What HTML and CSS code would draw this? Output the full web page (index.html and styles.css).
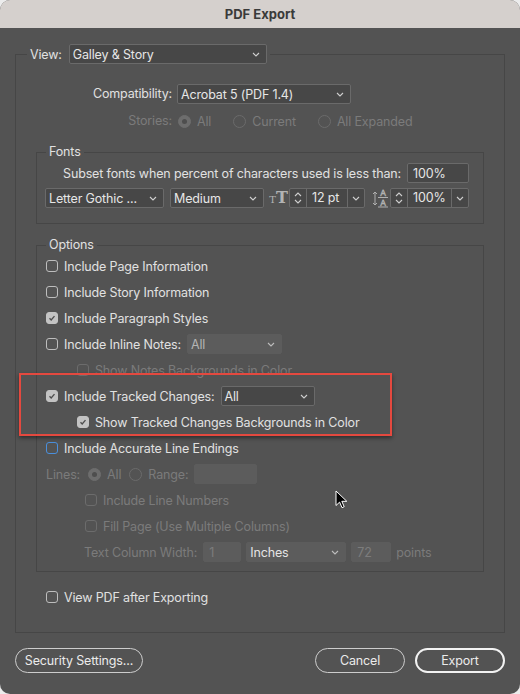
FILE: index.html
```html
<!DOCTYPE html>
<html>
<head>
<meta charset="utf-8">
<link rel="stylesheet" href="styles.css">
</head>
<body>
<div class="window">
  <div class="titlebar">PDF Export</div>
  <div class="main">
    <fieldset class="outer">
      <legend class="view-legend">
        <span>View:</span>
        <div class="select w-view"><span>Galley &amp; Story</span><svg class="chev" viewBox="0 0 8 5"><path d="M1 1l3 3 3-3"/></svg></div>
      </legend>

      <div class="compat">
        <span class="rlabel">Compatibility:</span>
        <div class="select w-compat"><span>Acrobat 5 (PDF 1.4)</span><svg class="chev" viewBox="0 0 8 5"><path d="M1 1l3 3 3-3"/></svg></div>
        <span class="rlabel dis">Stories:</span>
        <div class="radios">
          <span class="ritem"><span class="radio sel"></span><span class="dis">All</span></span>
          <span class="ritem"><span class="radio"></span><span class="dis">Current</span></span>
          <span class="ritem"><span class="radio"></span><span class="dis">All Expanded</span></span>
        </div>
      </div>

      <fieldset class="group fonts">
        <legend>Fonts</legend>
        <div class="subset-row">
          <span>Subset fonts when percent of characters used is less than:</span>
          <div class="input w-subset">100%</div>
        </div>
        <div class="font-row">
          <div class="select w-font"><span>Letter Gothic ...</span><svg class="chev" viewBox="0 0 8 5"><path d="M1 1l3 3 3-3"/></svg></div>
          <div class="select w-medium"><span>Medium</span><svg class="chev" viewBox="0 0 8 5"><path d="M1 1l3 3 3-3"/></svg></div>
          <span class="tt-icon"><span class="ts">T</span><span class="tb">T</span></span>
          <div class="combo w-size">
            <span class="spin"><svg viewBox="0 0 16 18"><path d="M5 7l3-3 3 3M5 11l3 3 3-3"/></svg></span>
            <span class="val">12 pt</span>
            <span class="drop"><svg class="chev" viewBox="0 0 8 5"><path d="M1 1l3 3 3-3"/></svg></span>
          </div>
          <svg class="lead-icon" viewBox="0 0 17 20">
            <path class="ln" d="M3 4v13M1 6l2-2 2 2M1 15l2 2 2-2"/>
            <text x="11" y="8" text-anchor="middle">A</text>
            <path class="ln" d="M6 9.5h10"/>
            <text x="11" y="17.5" text-anchor="middle">A</text>
            <path class="ln" d="M6 19h10"/>
          </svg>
          <div class="combo w-lead">
            <span class="spin"><svg viewBox="0 0 16 18"><path d="M5 7l3-3 3 3M5 11l3 3 3-3"/></svg></span>
            <span class="val">100%</span>
            <span class="drop"><svg class="chev" viewBox="0 0 8 5"><path d="M1 1l3 3 3-3"/></svg></span>
          </div>
        </div>
      </fieldset>

      <fieldset class="group options">
        <legend>Options</legend>
        <div class="row"><span class="cb"></span><span>Include Page Information</span></div>
        <div class="row"><span class="cb"></span><span>Include Story Information</span></div>
        <div class="row"><span class="cb on"><svg viewBox="0 0 12 12"><path d="M3 6.2l2 2.1 4-4.6"/></svg></span><span>Include Paragraph Styles</span></div>
        <div class="row"><span class="cb"></span><span>Include Inline Notes:</span>
          <div class="select dsel w-notes"><span>All</span><svg class="chev" viewBox="0 0 8 5"><path d="M1 1l3 3 3-3"/></svg></div>
        </div>
        <div class="row ind1"><span class="cb disb"></span><span class="dis">Show Notes Backgrounds in Color</span></div>
        <div class="row"><span class="cb on"><svg viewBox="0 0 12 12"><path d="M3 6.2l2 2.1 4-4.6"/></svg></span><span>Include Tracked Changes:</span>
          <div class="select w-tracked"><span>All</span><svg class="chev" viewBox="0 0 8 5"><path d="M1 1l3 3 3-3"/></svg></div>
        </div>
        <div class="row ind1"><span class="cb on"><svg viewBox="0 0 12 12"><path d="M3 6.2l2 2.1 4-4.6"/></svg></span><span>Show Tracked Changes Backgrounds in Color</span></div>
        <div class="row"><span class="cb focus"></span><span>Include Accurate Line Endings</span></div>
        <div class="row lines-row">
          <span class="dis">Lines:</span>
          <span class="ritem r-all"><span class="radio sel"></span><span class="dis">All</span></span>
          <span class="ritem r-range"><span class="radio"></span><span class="dis">Range:</span></span>
          <div class="input dinput w-range"></div>
        </div>
        <div class="row ind2"><span class="cb disb"></span><span class="dis">Include Line Numbers</span></div>
        <div class="row ind2"><span class="cb disb"></span><span class="dis">Fill Page (Use Multiple Columns)</span></div>
        <div class="row ind3 tcw-row">
          <span class="dis">Text Column Width:</span>
          <div class="input dinput w-tcw">1</div>
          <div class="select dsel bright w-inches"><span>Inches</span><svg class="chev" viewBox="0 0 8 5"><path d="M1 1l3 3 3-3"/></svg></div>
          <div class="input dinput w-pts">72</div>
          <span class="dis">points</span>
        </div>
      </fieldset>

      <div class="row view-pdf"><span class="cb"></span><span>View PDF after Exporting</span></div>
    </fieldset>

    <div class="buttons">
      <div class="btn sec">Security Settings...</div>
      <div class="btn cancel">Cancel</div>
      <div class="btn export">Export</div>
    </div>
  </div>

  <div class="highlight"></div>
  <svg class="cursor" viewBox="0 0 13 19"><path d="M1 1v14.5l3.6-3.4 2.4 5.6 2.2-1-2.4-5.4h5z"/></svg>
</div>
</body>
</html>
```

FILE: styles.css
```css
* { box-sizing: border-box; }
body {
  margin: 0;
  background: #ececec;
  font-family: Inter, "Noto Sans", "Liberation Sans", sans-serif;
  font-size: 12.5px;
  letter-spacing: -0.15px;
  color: #e1e1e1;
  white-space: nowrap;
}
.window {
  position: relative;
  width: 520px;
  height: 694px;
  background: #535353;
  border-radius: 10px;
  overflow: hidden;
}
.titlebar {
  height: 28px;
  background: #d5d0cd;
  color: #3a3a3a;
  font-weight: 700;
  font-size: 13px;
  letter-spacing: 0;
  display: flex;
  align-items: center;
  justify-content: center;
}
.main { padding: 0 15px; }

fieldset {
  margin: 0;
  min-width: 0;
  border: 1px solid #464646;
}
.outer {
  margin-top: 16px;
  padding: 0 20px 22px 20px;
}
.view-legend {
  margin-left: -9px;
  padding: 0 3px;
  display: flex;
  align-items: center;
  gap: 7px;
  height: 20px;
}

.select {
  display: flex;
  align-items: center;
  justify-content: space-between;
  height: 20px;
  background: #474747;
  border: 1px solid #6a6a6a;
  border-radius: 2px;
  padding: 0 6px 0 3px;
  color: #e6e6e6;
  flex: none;
}
.chev {
  width: 8px;
  height: 5px;
  fill: none;
  stroke: #cfcfcf;
  stroke-width: 1.1;
}
.w-view { width: 198px; }
.w-compat { width: 174px; }
.w-font { width: 119px; }
.w-medium { width: 94px; }
.w-notes { width: 95px; }
.w-tracked { width: 94px; }
.w-inches { width: 100px; }

.dsel {
  background: #5c5c5c;
  border-color: #5c5c5c;
  color: #b4b4b4;
}
.dsel .chev { stroke: #bdbdbd; }
.dsel.bright { color: #e4e4e4; }

.input {
  height: 20px;
  background: #474747;
  border: 1px solid #6a6a6a;
  border-radius: 2px;
  padding-left: 5px;
  display: flex;
  align-items: center;
  color: #e6e6e6;
  flex: none;
}
.dinput {
  background: #5c5c5c;
  border-color: #5c5c5c;
  color: #7c7c7c;
}
.w-subset { width: 62px; }
.w-range { width: 63px; }
.w-tcw { width: 38px; }
.w-pts { width: 40px; }

.compat {
  display: grid;
  grid-template-columns: 136px auto;
  column-gap: 5px;
  row-gap: 7px;
  margin-top: 20px;
  align-items: center;
}
.compat > * { height: 20px; }
.rlabel {
  text-align: right;
  line-height: 20px;
}
.dis { color: #7b7b7b; }
.radios {
  display: flex;
  align-items: center;
  gap: 22px;
  padding-left: 1px;
}
.ritem {
  display: flex;
  align-items: center;
  gap: 6px;
}
.radio {
  width: 13px;
  height: 13px;
  border: 1px solid #6b6b6b;
  border-radius: 50%;
  flex: none;
  display: flex;
  align-items: center;
  justify-content: center;
}
.radio.sel {
  background: #6d6d6d;
  border-color: #6d6d6d;
}
.radio.sel::after {
  content: "";
  width: 5px;
  height: 5px;
  border-radius: 50%;
  background: #4e4e4e;
}

.group {
  margin-top: 13px;
  padding: 0 14px 15px 9px;
}
.group.options { padding-bottom: 6px; }
.group > legend {
  padding: 0 3px;
  height: 16px;
  line-height: 16px;
}

.subset-row {
  display: flex;
  justify-content: flex-end;
  align-items: center;
  gap: 6px;
  margin-top: 3px;
  height: 20px;
}
.font-row {
  display: flex;
  align-items: center;
  margin-top: 5px;
  margin-left: -1px;
  height: 20px;
}
.w-medium { margin-left: 6px; }
.tt-icon {
  margin-left: 6px;
  width: 17px;
  height: 20px;
  display: flex;
  align-items: baseline;
  justify-content: center;
  font-family: "DejaVu Serif", "Liberation Serif", serif;
  color: #b3b3b3;
  line-height: 20px;
  letter-spacing: 0;
}
.tt-icon .ts { font-size: 10px; }
.tt-icon .tb { font-size: 16px; font-weight: 700; }
.combo {
  display: flex;
  height: 20px;
  background: #474747;
  border: 1px solid #6a6a6a;
  border-radius: 2px;
  flex: none;
}
.w-size { width: 76px; margin-left: 2px; }
.w-lead { width: 79px; margin-left: 1px; }
.spin {
  width: 17px;
  border-right: 1px solid #6a6a6a;
  display: flex;
  align-items: center;
  justify-content: center;
}
.spin svg {
  width: 16px;
  height: 18px;
  fill: none;
  stroke: #cfcfcf;
  stroke-width: 1.1;
}
.val {
  flex: 1;
  padding-left: 5px;
  line-height: 18px;
  color: #e6e6e6;
}
.drop {
  width: 17px;
  border-left: 1px solid #6a6a6a;
  display: flex;
  align-items: center;
  justify-content: center;
}
.lead-icon {
  width: 17px;
  height: 20px;
  margin-left: 7px;
  flex: none;
}
.lead-icon text {
  font-family: "Liberation Sans", sans-serif;
  font-size: 8.5px;
  fill: none;
  stroke: #b0b0b0;
  stroke-width: 0.6;
}
.lead-icon .ln {
  fill: none;
  stroke: #b0b0b0;
  stroke-width: 1;
}

.row {
  display: flex;
  align-items: center;
  gap: 6px;
  height: 26px;
}
.ind1 { padding-left: 31px; }
.ind2 { padding-left: 39px; }
.ind3 { padding-left: 38px; }
.lines-row { gap: 0; }
.lines-row .r-all { margin-left: 8px; }
.lines-row .r-range { margin-left: 8px; }
.lines-row .w-range { margin-left: 6px; }
.tcw-row { gap: 5px; }
.tcw-row .w-tcw { margin-left: 1px; }

.cb {
  width: 12px;
  height: 12px;
  border: 1px solid #bdbdbd;
  border-radius: 3px;
  flex: none;
  display: flex;
}
.cb svg {
  width: 100%;
  height: 100%;
  fill: none;
  stroke: #4e4e4e;
  stroke-width: 1.6;
}
.cb.on {
  background: #c3c3c3;
  border-color: #c3c3c3;
}
.cb.disb { border-color: #6c6c6c; }
.cb.focus { border-color: #4a8fdc; }

.view-pdf {
  margin-top: 12px;
  padding-left: 10px;
}

.buttons {
  display: flex;
  gap: 10px;
  margin-top: 15px;
}
.btn {
  height: 25px;
  border: 1px solid #cdcdcd;
  border-radius: 13px;
  display: flex;
  align-items: center;
  justify-content: center;
  color: #ebebeb;
}
.btn.sec { width: 128px; margin-right: auto; }
.btn.cancel { width: 90px; }
.btn.export { width: 90px; border: 2px solid #f2f2f2; }

.highlight {
  position: absolute;
  left: 19px;
  top: 373px;
  width: 373px;
  height: 63px;
  border: 2px solid #e4493f;
  box-shadow: 0 2px 4px rgba(0, 0, 0, 0.45);
}
.cursor {
  position: absolute;
  left: 335px;
  top: 490px;
  width: 13px;
  height: 19px;
}
.cursor path {
  fill: #000;
  stroke: #fff;
  stroke-width: 1;
  stroke-linejoin: round;
}
```
